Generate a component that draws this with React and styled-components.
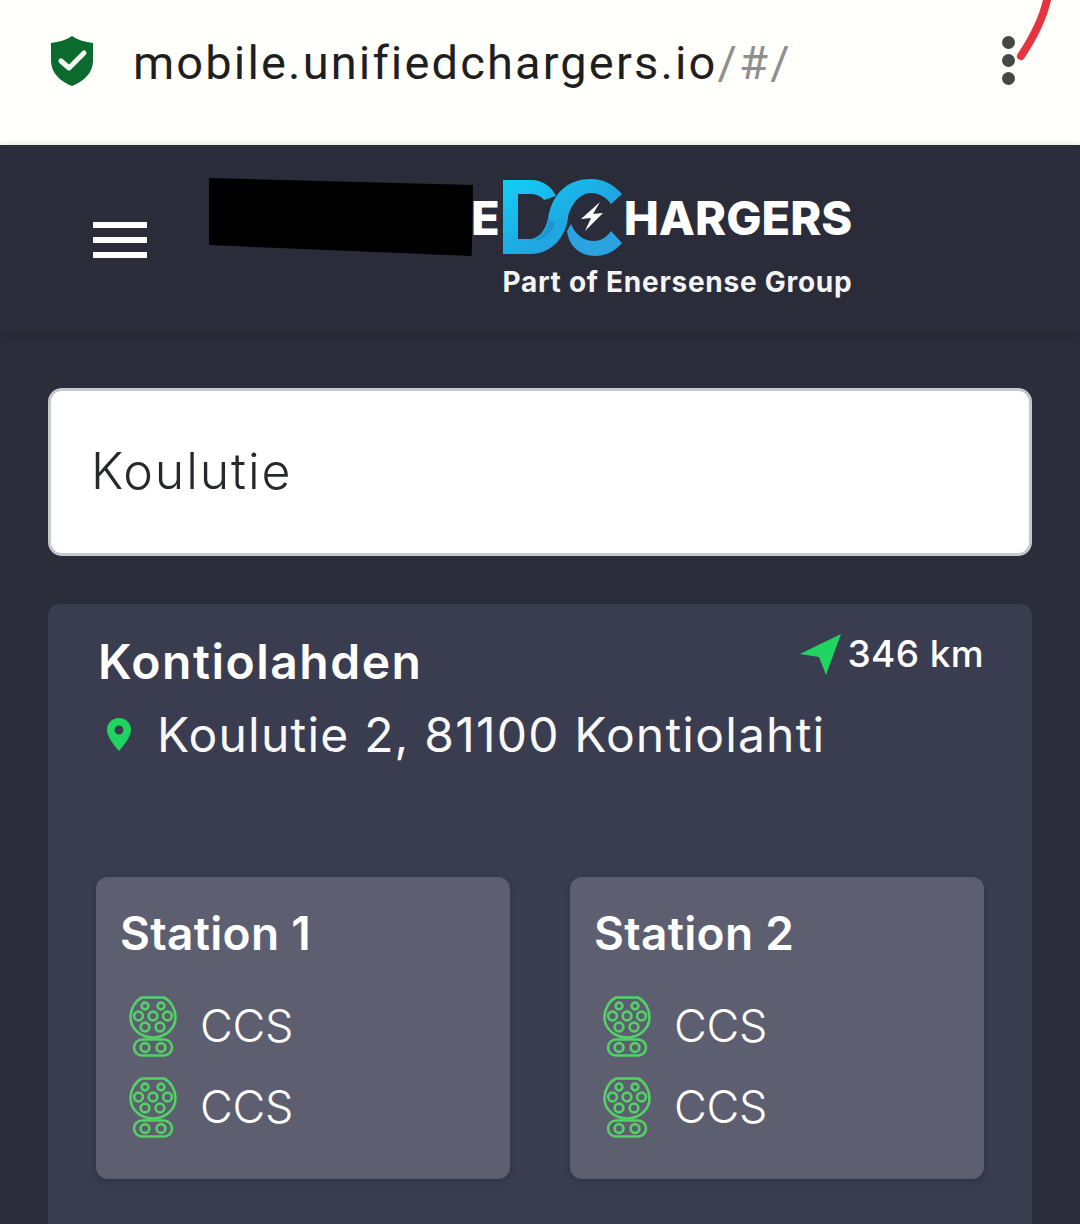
import React from "react";
import styled, { createGlobalStyle } from "styled-components";

const Global = createGlobalStyle`
  html, body { margin: 0; padding: 0; background: #2b2e3a; }
  * { box-sizing: border-box; }
  #root { width: 1080px; height: 1224px; overflow: hidden; }
`;

const Page = styled.div`
  width: 1080px;
  height: 1224px;
  background: #2b2e3a;
  font-family: Inter, "Noto Sans", sans-serif;
  color: #fff;
  overflow: hidden;
`;

const BrowserBar = styled.div`
  height: 145px;
  background: #fffffb;
  display: flex;
  align-items: center;
  padding: 0 48px 20px 51px;
  position: relative;
`;

const ShieldIcon = styled.svg`
  margin-top: -3px;
  flex: none;
`;

const Url = styled.div`
  font-family: Roboto, sans-serif;
  font-size: 47px;
  letter-spacing: 2.15px;
  color: #1f1f1f;
  margin-left: 40px;
  flex: 1;
  line-height: 56px;
  white-space: nowrap;
`;

const UrlMuted = styled.span`
  color: #8f8f8f;
`;

const Dots = styled.div`
  display: flex;
  flex-direction: column;
  gap: 5px;
  margin-right: 17px;
  margin-top: -4px;
`;

const Dot = styled.span`
  width: 13px;
  height: 13px;
  border-radius: 50%;
  background: #454842;
`;

const Scribble = styled.svg`
  position: absolute;
  top: 0;
  left: 1010px;
`;

const Header = styled.header`
  height: 188px;
  background: #2a2d39;
  box-shadow: 0 2px 8px rgba(0, 0, 0, 0.25);
  display: flex;
  align-items: flex-start;
  padding: 33px 0 0 93px;
  position: relative;
`;

const Burger = styled.div`
  width: 54px;
  margin-top: 44px;
  display: flex;
  flex-direction: column;
  gap: 9px;
`;

const BurgerBar = styled.span`
  height: 6px;
  background: #fff;
`;

const Logo = styled.div`
  margin-left: 62px;
  display: flex;
  flex-direction: column;
  align-items: flex-end;
`;

const LogoRow = styled.div`
  display: flex;
  align-items: center;
  height: 80px;
`;

const Redaction = styled.div`
  width: 264px;
  height: 78px;
  margin-top: -2px;
  background: #000;
  clip-path: polygon(0 0, 100% 7px, 99.5% 100%, 0 67px);
`;

const LogoWord = styled.span`
  font-family: Inter, sans-serif;
  font-weight: 800;
  font-size: 47px;
  line-height: 1;
  color: #fff;
  margin: ${(p) => p.$m || "-2px 0 0"};
`;

const DcSvg = styled.svg`
  margin: -2px 1px 0 3px;
  flex: none;
`;

const Tagline = styled.div`
  font-family: Inter, sans-serif;
  font-weight: 700;
  font-size: 28px;
  letter-spacing: 0.73px;
  line-height: 34px;
  color: #f4f4f4;
  margin-top: 7px;
  white-space: nowrap;
`;

const Main = styled.main`
  padding: 55px 48px 0 48px;
`;

const Search = styled.div`
  height: 168px;
  background: #fff;
  border: 3px solid #c6c9cc;
  border-radius: 14px;
  display: flex;
  align-items: center;
  padding: 0 0 2px 40px;
  font-size: 50px;
  font-weight: 300;
  color: #26282c;
  letter-spacing: 1.9px;
`;

const Card = styled.section`
  margin-top: 48px;
  height: 640px;
  background: #3a3d50;
  border-radius: 12px;
  padding: 24px 48px 0 48px;
`;

const CardHead = styled.div`
  display: flex;
  justify-content: space-between;
  align-items: flex-start;
`;

const Site = styled.h2`
  margin: 0 0 0 2px;
  font-size: 48px;
  letter-spacing: 1.5px;
  font-weight: 600;
  line-height: 68px;
  color: #fff;
`;

const Distance = styled.div`
  display: flex;
  align-items: center;
  gap: 5px;
  margin-top: 4px;
  font-size: 37px;
  letter-spacing: 0.4px;
  font-weight: 500;
  line-height: 44px;
`;

const NavIcon = styled.svg`
  margin-top: 2px;
`;

const Address = styled.div`
  display: flex;
  align-items: center;
  margin-left: 11px;
  height: 66px;
  margin-top: 5px;
  font-size: 48px;
  letter-spacing: 1.2px;
  font-weight: 400;
  gap: 26px;
  color: #f8f8f8;
`;

const Stations = styled.div`
  margin-top: 110px;
  display: grid;
  grid-template-columns: 414px 414px;
  column-gap: 60px;
`;

const Station = styled.article`
  height: 302px;
  background: #5d5f71;
  border-radius: 12px;
  box-shadow: 0 2px 6px rgba(0, 0, 0, 0.2);
  padding: 26px 24px 0;
`;

const StationName = styled.h3`
  margin: 0;
  font-size: 46px;
  letter-spacing: 0.3px;
  font-weight: 600;
  line-height: 60px;
`;

const Connector = styled.div`
  display: flex;
  align-items: center;
  height: 61px;
  margin: 0 0 20px 9px;
  gap: 23px;
  font-size: 45px;
  font-weight: 300;
  letter-spacing: -0.3px;
`;

const ConnectorName = styled.span`
  margin-top: -2px;
`;

const Connectors = styled.div`
  margin-top: 33px;
`;

const Shield = () => (
  <ShieldIcon width="42" height="50" viewBox="0 0 42 50">
    <path d="M21 0 C27 4 34 6 42 7 V25 C42 37 32 46 21 50 C10 46 0 37 0 25 V7 C8 6 15 4 21 0Z" fill="#0b6b2c" />
    <path d="M10 25 L18 32 L33 17" fill="none" stroke="#f2f6ef" strokeWidth="5" strokeLinecap="round" strokeLinejoin="round" />
  </ShieldIcon>
);

const DcMark = () => (
  <DcSvg width="120" height="77" viewBox="0 0 120 77">
    <defs>
      <linearGradient id="dcg" x1="0" y1="0" x2="1" y2="1">
        <stop offset="0" stopColor="#12d0f6" />
        <stop offset="0.55" stopColor="#1fa8e2" />
        <stop offset="1" stopColor="#2a9bdb" />
      </linearGradient>
    </defs>
    <path d="M0 1 H28 C40 1 49 8 53 17 L41 21 C37 16 32 15 26 15 H15 V60 H26 C36 60 42 52 45 40 C48 18 62 0 88 0 C100 0 110 5 119 15 L108 25 C103 18 96 14 88 14 C77 14 68 25 65 38 C64 55 50 75 28 75 H0Z" fill="url(#dcg)" />
    <path d="M28 62 C38 60 44 52 46 40 L52 44 C50 54 40 62 28 62Z" fill="#1b6fb0" opacity="0.35" />
    <path d="M64 52 C66 68 78 77 92 77 C103 77 112 72 119 64 L108 52 C104 58 98 62 91 62 C80 62 72 55 68 45Z" fill="#2aa3e0" />
    <path d="M97 23 L78 40 L88 39 L82 52 L100 34 L90 35Z" fill="#fff" />
  </DcSvg>
);

const Nav = () => (
  <NavIcon width="42" height="42" viewBox="0 0 42 42">
    <path d="M41 0 L0 20 L19 23 L26 41Z" fill="#1fd45f" />
  </NavIcon>
);

const Pin = () => (
  <svg width="24" height="33" viewBox="0 0 24 33">
    <path fillRule="evenodd" d="M12 0 C5 0 0 5 0 12 C0 20 12 33 12 33 C12 33 24 20 24 12 C24 5 19 0 12 0Z M12 7.5 A4.5 4.5 0 1 1 12 16.5 A4.5 4.5 0 1 1 12 7.5Z" fill="#1fd45f" />
  </svg>
);

const CcsIcon = () => (
  <svg width="48" height="61" viewBox="0 0 48 61" fill="none" stroke="#53d167" strokeWidth="2.6">
    <path d="M13 1.5 H35 C42 5 46.5 13 46.5 21 C46.5 33 36 41.5 24 41.5 C12 41.5 1.5 33 1.5 21 C1.5 13 6 5 13 1.5Z" />
    <rect x="5" y="43.5" width="38" height="16" rx="8" />
    <circle cx="16" cy="10" r="3.4" />
    <circle cx="32" cy="10" r="3.4" />
    <circle cx="9.5" cy="20" r="4.4" />
    <circle cx="24" cy="20" r="4.4" />
    <circle cx="38.5" cy="20" r="4.4" />
    <circle cx="16" cy="31" r="4.4" />
    <circle cx="31" cy="31" r="4.4" />
    <circle cx="16" cy="51.5" r="4.4" />
    <circle cx="32" cy="51.5" r="4.4" />
  </svg>
);

const StationCard = ({ name }) => (
  <Station>
    <StationName>{name}</StationName>
    <Connectors>
      <Connector><CcsIcon /><ConnectorName>CCS</ConnectorName></Connector>
      <Connector><CcsIcon /><ConnectorName>CCS</ConnectorName></Connector>
    </Connectors>
  </Station>
);

export default function App() {
  return (
    <Page>
      <Global />
      <BrowserBar>
        <Shield />
        <Url>mobile.unifiedchargers.io<UrlMuted>/#/</UrlMuted></Url>
        <Dots><Dot /><Dot /><Dot /></Dots>
        <Scribble width="50" height="62" viewBox="0 0 50 62">
          <path d="M37 0 C33 18 23 38 11 56" fill="none" stroke="#e5343f" strokeWidth="8" strokeLinecap="round" />
        </Scribble>
      </BrowserBar>
      <Header>
        <Burger><BurgerBar /><BurgerBar /><BurgerBar /></Burger>
        <Logo>
          <LogoRow>
            <Redaction />
            <LogoWord $m="-2px 0 0 -2px">E</LogoWord>
            <DcMark />
            <LogoWord>HARGERS</LogoWord>
          </LogoRow>
          <Tagline>Part of Enersense Group</Tagline>
        </Logo>
      </Header>
      <Main>
        <Search>Koulutie</Search>
        <Card>
          <CardHead>
            <Site>Kontiolahden</Site>
            <Distance><Nav />346 km</Distance>
          </CardHead>
          <Address><Pin />Koulutie 2, 81100 Kontiolahti</Address>
          <Stations>
            <StationCard name="Station 1" />
            <StationCard name="Station 2" />
          </Stations>
        </Card>
      </Main>
    </Page>
  );
}
